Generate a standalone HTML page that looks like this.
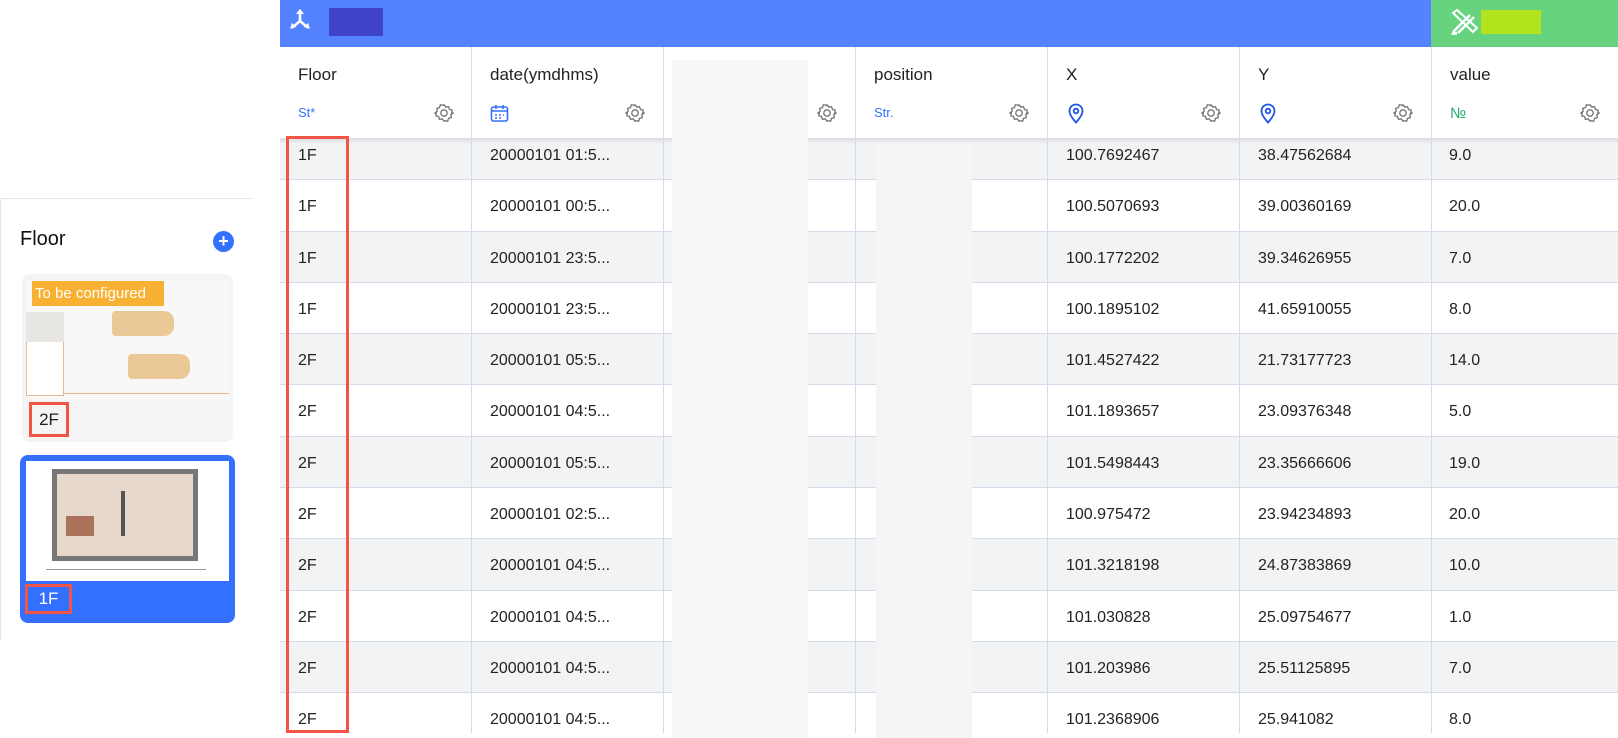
<!DOCTYPE html>
<html><head><meta charset="utf-8"><style>
*{box-sizing:border-box;margin:0;padding:0}
body{width:1618px;height:738px;overflow:hidden;background:#fff;font-family:"Liberation Sans",Arial,sans-serif;color:#222;position:relative}
.abs{position:absolute}
.hdr{left:280px;top:0;width:1151px;height:47px;background:#5582ff}
.hdrg{left:1431px;top:0;width:187px;height:47px;background:#68d37f}
.col{position:absolute;top:47px;width:192px;height:93px;border-left:1px solid #d5dbe8;background:#fff}
.col .t{position:absolute;left:18px;top:18px;font-size:17px;color:#222}
.col .i{position:absolute;left:18px;top:58px;font-size:13px}
.gear{position:absolute;right:18px;top:56px}
.rows{left:280px;top:140px;width:1338px;height:593px;overflow:hidden}
.rowsin{position:absolute;top:-11px;left:0;width:100%}
.r{height:51.3px;border-bottom:1px solid #d5dbe8;position:relative;font-size:16px}
.r:nth-child(odd){background:#f2f3f5}
.r span{position:absolute;top:18px}
.vl{position:absolute;top:47px;width:1px;height:686px;background:#d5dbe8}
.shadow{left:280px;top:138px;width:1338px;height:6px;background:linear-gradient(#d8dbe0,rgba(240,240,240,0))}
</style></head><body>
<div class="abs" style="left:0;top:198px;width:253px;height:1px;background:#e5e5e5"></div>
<div class="abs" style="left:0;top:198px;width:1px;height:442px;background:#e5e5e5"></div>
<div class="abs" style="left:20px;top:228px;font-size:20px;color:#111">Floor</div>
<div class="abs" style="left:213px;top:231px;width:21px;height:21px;border-radius:50%;background:#3370ff;color:#fff;font-size:18px;font-weight:bold;text-align:center;line-height:21px">+</div>
<div class="abs" style="left:22px;top:274px;width:211px;height:168px;background:#f4f4f4;border-radius:8px">
 <div class="abs" style="left:4px;top:6px;width:203px;height:120px;background:#f8f8f8">
  <div class="abs" style="left:0;top:32px;width:38px;height:84px;border:1px solid #e8b890;background:#fff"></div>
  <div class="abs" style="left:0;top:32px;width:38px;height:30px;background:#e9e7e3"></div>
  <div class="abs" style="left:86px;top:31px;width:62px;height:25px;background:#ebc996;border-radius:4px 10px 10px 4px"></div>
  <div class="abs" style="left:102px;top:74px;width:62px;height:25px;background:#ebc996;border-radius:4px 10px 10px 4px"></div>
  <div class="abs" style="left:38px;top:113px;width:165px;height:1px;background:#e8b890"></div>
 </div>
 <div class="abs" style="left:10px;top:7px;width:132px;height:25px;background:#f8b133;color:#fff;font-size:15px;line-height:25px;padding-left:3px">To be configured</div>
 <div class="abs" style="left:7px;top:128px;width:40px;height:35px;border:3px solid #f25546;font-size:17px;line-height:29px;text-align:center">2F</div>
</div>
<div class="abs" style="left:20px;top:455px;width:215px;height:168px;background:#3370ff;border-radius:8px">
 <div class="abs" style="left:6px;top:6px;width:203px;height:120px;background:#fff">
  <div class="abs" style="left:26px;top:8px;width:146px;height:92px;background:#777"></div>
  <div class="abs" style="left:31px;top:13px;width:136px;height:82px;background:#e6d9cc"></div>
  <div class="abs" style="left:40px;top:55px;width:28px;height:20px;background:#a9725a"></div>
  <div class="abs" style="left:95px;top:30px;width:4px;height:45px;background:#555"></div>
  <div class="abs" style="left:20px;top:108px;width:160px;height:1px;background:#999"></div>
 </div>
 <div class="abs" style="left:5px;top:129px;width:47px;height:30px;border:3px solid #f25546;font-size:17px;line-height:24px;text-align:center;color:#fff">1F</div>
</div>

<div class="abs hdr"></div>
<svg class="abs" style="left:289px;top:8px" width="22" height="22" viewBox="0 0 22 22"><g stroke="#fff" stroke-width="2.6" fill="none" stroke-linecap="round"><path d="M11 3v10M11 13l-7 6M11 13l7 6"/></g><path d="M11 1l-4 5h8z M1 21l2-6 4 4z M21 21l-2-6-4 4z" fill="#fff"/></svg>
<div class="abs" style="left:329px;top:8px;width:54px;height:28px;background:#4044c9"></div>
<div class="abs hdrg"></div>
<svg class="abs" style="left:1450px;top:9px" width="28" height="26" viewBox="0 0 28 26"><g stroke="#fff" stroke-width="2.5" fill="none"><path d="M4 22L20 6M8 24L24 8M4 22l-1 3 4-1"/><path d="M3 4l4-3 20 18-4 4z" stroke-width="2"/></g></svg>
<div class="abs" style="left:1481px;top:10px;width:60px;height:24px;background:#b3e31d"></div>

<div class="col" style="left:280px;border-left:none"><div class="t">Floor</div><div class="i" style="color:#3370ff">St*</div><svg class="gear" width="20" height="20" viewBox="0 0 22 22"><path d="M11 2l2 2.5 3-.5 1 3 3 1-.5 3L21 11l-2.5 2 .5 3-3 1-1 3-3-.5L11 20l-2-2.5-3 .5-1-3-3-1 .5-3L1 11l2.5-2L3 6l3-1 1-3 3 .5z" fill="none" stroke="#777" stroke-width="1.5"/><circle cx="11" cy="11" r="3.5" fill="none" stroke="#777" stroke-width="1.5"/></svg></div>
<div class="col" style="left:471px"><div class="t">date(ymdhms)</div><svg class="abs" style="left:18px;top:57px" width="19" height="19" viewBox="0 0 19 19"><rect x="1.5" y="3" width="16" height="14" rx="2" fill="none" stroke="#3370ff" stroke-width="1.6"/><path d="M1.5 7h16M6 1v4M13 1v4" stroke="#3370ff" stroke-width="1.6"/><path d="M5 11h2M9 11h2M13 11h1M5 14h2M9 14h2" stroke="#3370ff" stroke-width="1.5"/></svg><svg class="gear" width="20" height="20" viewBox="0 0 22 22"><path d="M11 2l2 2.5 3-.5 1 3 3 1-.5 3L21 11l-2.5 2 .5 3-3 1-1 3-3-.5L11 20l-2-2.5-3 .5-1-3-3-1 .5-3L1 11l2.5-2L3 6l3-1 1-3 3 .5z" fill="none" stroke="#777" stroke-width="1.5"/><circle cx="11" cy="11" r="3.5" fill="none" stroke="#777" stroke-width="1.5"/></svg></div>
<div class="col" style="left:663px"><svg class="gear" width="20" height="20" viewBox="0 0 22 22"><path d="M11 2l2 2.5 3-.5 1 3 3 1-.5 3L21 11l-2.5 2 .5 3-3 1-1 3-3-.5L11 20l-2-2.5-3 .5-1-3-3-1 .5-3L1 11l2.5-2L3 6l3-1 1-3 3 .5z" fill="none" stroke="#777" stroke-width="1.5"/><circle cx="11" cy="11" r="3.5" fill="none" stroke="#777" stroke-width="1.5"/></svg></div>
<div class="col" style="left:855px"><div class="t">position</div><div class="i" style="color:#3370ff">Str.</div><svg class="gear" width="20" height="20" viewBox="0 0 22 22"><path d="M11 2l2 2.5 3-.5 1 3 3 1-.5 3L21 11l-2.5 2 .5 3-3 1-1 3-3-.5L11 20l-2-2.5-3 .5-1-3-3-1 .5-3L1 11l2.5-2L3 6l3-1 1-3 3 .5z" fill="none" stroke="#777" stroke-width="1.5"/><circle cx="11" cy="11" r="3.5" fill="none" stroke="#777" stroke-width="1.5"/></svg></div>
<div class="col" style="left:1047px"><div class="t">X</div><svg class="abs" style="left:20px;top:56px" width="16" height="21" viewBox="0 0 16 21"><path d="M8 19.5C4 15 1.5 11 1.5 8a6.5 6.5 0 0113 0c0 3-2.5 7-6.5 11.5z" fill="none" stroke="#2255e6" stroke-width="1.8"/><circle cx="8" cy="8" r="2.3" fill="none" stroke="#2255e6" stroke-width="1.8"/></svg><svg class="gear" width="20" height="20" viewBox="0 0 22 22"><path d="M11 2l2 2.5 3-.5 1 3 3 1-.5 3L21 11l-2.5 2 .5 3-3 1-1 3-3-.5L11 20l-2-2.5-3 .5-1-3-3-1 .5-3L1 11l2.5-2L3 6l3-1 1-3 3 .5z" fill="none" stroke="#777" stroke-width="1.5"/><circle cx="11" cy="11" r="3.5" fill="none" stroke="#777" stroke-width="1.5"/></svg></div>
<div class="col" style="left:1239px"><div class="t">Y</div><svg class="abs" style="left:20px;top:56px" width="16" height="21" viewBox="0 0 16 21"><path d="M8 19.5C4 15 1.5 11 1.5 8a6.5 6.5 0 0113 0c0 3-2.5 7-6.5 11.5z" fill="none" stroke="#2255e6" stroke-width="1.8"/><circle cx="8" cy="8" r="2.3" fill="none" stroke="#2255e6" stroke-width="1.8"/></svg><svg class="gear" width="20" height="20" viewBox="0 0 22 22"><path d="M11 2l2 2.5 3-.5 1 3 3 1-.5 3L21 11l-2.5 2 .5 3-3 1-1 3-3-.5L11 20l-2-2.5-3 .5-1-3-3-1 .5-3L1 11l2.5-2L3 6l3-1 1-3 3 .5z" fill="none" stroke="#777" stroke-width="1.5"/><circle cx="11" cy="11" r="3.5" fill="none" stroke="#777" stroke-width="1.5"/></svg></div>
<div class="col" style="left:1431px;width:187px"><div class="t">value</div><div class="i" style="color:#1aad6a;font-size:15px">№</div><svg class="gear" width="20" height="20" viewBox="0 0 22 22"><path d="M11 2l2 2.5 3-.5 1 3 3 1-.5 3L21 11l-2.5 2 .5 3-3 1-1 3-3-.5L11 20l-2-2.5-3 .5-1-3-3-1 .5-3L1 11l2.5-2L3 6l3-1 1-3 3 .5z" fill="none" stroke="#777" stroke-width="1.5"/><circle cx="11" cy="11" r="3.5" fill="none" stroke="#777" stroke-width="1.5"/></svg></div>

<div class="abs rows"><div class="rowsin">
<div class="r"><span style="left:18px">1F</span><span style="left:210px">20000101 01:5...</span><span style="left:786px">100.7692467</span><span style="left:978px">38.47562684</span><span style="left:1169px">9.0</span></div>
<div class="r"><span style="left:18px">1F</span><span style="left:210px">20000101 00:5...</span><span style="left:786px">100.5070693</span><span style="left:978px">39.00360169</span><span style="left:1169px">20.0</span></div>
<div class="r"><span style="left:18px">1F</span><span style="left:210px">20000101 23:5...</span><span style="left:786px">100.1772202</span><span style="left:978px">39.34626955</span><span style="left:1169px">7.0</span></div>
<div class="r"><span style="left:18px">1F</span><span style="left:210px">20000101 23:5...</span><span style="left:786px">100.1895102</span><span style="left:978px">41.65910055</span><span style="left:1169px">8.0</span></div>
<div class="r"><span style="left:18px">2F</span><span style="left:210px">20000101 05:5...</span><span style="left:786px">101.4527422</span><span style="left:978px">21.73177723</span><span style="left:1169px">14.0</span></div>
<div class="r"><span style="left:18px">2F</span><span style="left:210px">20000101 04:5...</span><span style="left:786px">101.1893657</span><span style="left:978px">23.09376348</span><span style="left:1169px">5.0</span></div>
<div class="r"><span style="left:18px">2F</span><span style="left:210px">20000101 05:5...</span><span style="left:786px">101.5498443</span><span style="left:978px">23.35666606</span><span style="left:1169px">19.0</span></div>
<div class="r"><span style="left:18px">2F</span><span style="left:210px">20000101 02:5...</span><span style="left:786px">100.975472</span><span style="left:978px">23.94234893</span><span style="left:1169px">20.0</span></div>
<div class="r"><span style="left:18px">2F</span><span style="left:210px">20000101 04:5...</span><span style="left:786px">101.3218198</span><span style="left:978px">24.87383869</span><span style="left:1169px">10.0</span></div>
<div class="r"><span style="left:18px">2F</span><span style="left:210px">20000101 04:5...</span><span style="left:786px">101.030828</span><span style="left:978px">25.09754677</span><span style="left:1169px">1.0</span></div>
<div class="r"><span style="left:18px">2F</span><span style="left:210px">20000101 04:5...</span><span style="left:786px">101.203986</span><span style="left:978px">25.51125895</span><span style="left:1169px">7.0</span></div>
<div class="r"><span style="left:18px">2F</span><span style="left:210px">20000101 04:5...</span><span style="left:786px">101.2368906</span><span style="left:978px">25.941082</span><span style="left:1169px">8.0</span></div>
</div></div>
<div class="abs shadow"></div>
<div class="vl" style="left:471px"></div><div class="vl" style="left:663px"></div><div class="vl" style="left:855px"></div><div class="vl" style="left:1047px"></div><div class="vl" style="left:1239px"></div><div class="vl" style="left:1431px"></div>
<div class="abs" style="left:672px;top:60px;width:136px;height:678px;background:#f7f7f8"></div>
<div class="abs" style="left:876px;top:144px;width:96px;height:594px;background:#f5f5f6"></div>
<div class="abs" style="left:286px;top:136px;width:63px;height:597px;border:3px solid #f25546"></div>
</body></html>
